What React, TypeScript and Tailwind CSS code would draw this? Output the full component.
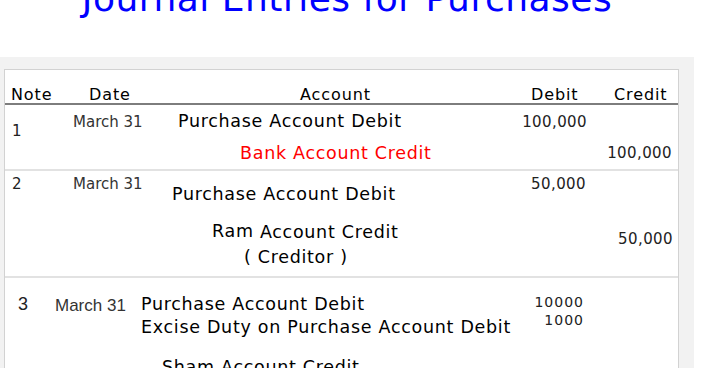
import React from "react";

const sans = "font-['DejaVu_Sans',sans-serif]";
const arial = "font-['Liberation_Sans',Arial,sans-serif]";

const HeaderRow = () => (
    <div className={`flex items-end h-[35px] border-b-2 border-[#7d7d7d] text-[16px] leading-none tracking-[0.9px] text-black ${sans}`}>
        <div className="w-[84px] pl-[6px]">Note</div>
        <div className="w-[211px]">Date</div>
        <div className="w-[231px]">Account</div>
        <div className="w-[83px]">Debit</div>
        <div className="flex-1">Credit</div>
    </div>
);

const EntryOne = () => (
    <div className={`flex h-[66px] border-b-2 border-[#e2e2e2] leading-none ${sans}`}>
        <div className="w-[60px] pl-[7px] pt-[19px] text-[15px] text-[#222]">1</div>
        <div className="w-[100px] pl-[8px] pt-[10px] text-[15px] text-[#333]">March 31</div>
        <div className="w-[340px] pt-[8px] text-[17.5px] tracking-[0.7px]">
            <div className="ml-[13px] text-black">Purchase Account Debit</div>
            <div className="ml-[75px] mt-[14px] text-[#ff0000]">Bank Account Credit</div>
        </div>
        <div className="w-[90px] pr-[8px] pt-[10px] text-right text-[15px] tracking-[0.4px] text-[#222]">100,000</div>
        <div className="flex-1 pr-[6px] pt-[41px] text-right text-[15px] tracking-[0.4px] text-[#222]">100,000</div>
    </div>
);

const EntryTwo = () => (
    <div className={`flex h-[107px] border-b-2 border-[#e2e2e2] leading-none ${sans}`}>
        <div className="w-[60px] pl-[7px] pt-[6px] text-[15px] text-[#222]">2</div>
        <div className="w-[100px] pl-[8px] pt-[6px] text-[15px] text-[#333]">March 31</div>
        <div className="w-[340px] pt-[15px] text-[17.5px] tracking-[0.7px] text-black">
            <div className="ml-[7px]">Purchase Account Debit</div>
            <div className="ml-[47px] mt-[19px]">
                <span className="align-[1px]">Ram</span> Account Credit
            </div>
            <div className="ml-[79px] mt-[8px]">( Creditor )</div>
        </div>
        <div className="w-[90px] pr-[9px] pt-[6px] text-right text-[15px] tracking-[0.4px] text-[#222]">50,000</div>
        <div className="flex-1 pr-[5px] pt-[61px] text-right text-[15px] tracking-[0.4px] text-[#222]">50,000</div>
    </div>
);

const EntryThree = () => (
    <div className="flex leading-none">
        <div className={`w-[45px] pl-[13px] pt-[17px] text-[18px] text-[#222] ${arial}`}>3</div>
        <div className={`w-[85px] pl-[5px] pt-[19px] text-[17px] text-[#333] ${arial}`}>March 31</div>
        <div className={`w-[385px] pl-[6px] pt-[18px] text-[17.5px] tracking-[0.7px] text-black ${sans}`}>
            <div>Purchase Account Debit</div>
            <div className="mt-[5px]">Excise Duty on Purchase Account Debit</div>
            <div className="ml-[21px] mt-[23px]">Sham Account Credit</div>
        </div>
        <div className={`w-[75px] pr-[11px] pt-[17px] text-right text-[14px] tracking-[1px] text-[#222] ${sans}`}>
            <div>10000</div>
            <div className="mt-[4px]">1000</div>
        </div>
    </div>
);

export default function App() {
    return (
        <div className="flex flex-col w-[701px] h-[368px] overflow-hidden bg-white">
            <div className="w-[694px] h-[57px] shrink-0">
                <h1 className={`-mt-[19px] text-center text-[36px] leading-none tracking-[0.5px] text-[#0000ff] ${sans}`}>
                    Journal Entries for Purchases
                </h1>
            </div>
            <section className="w-[694px] flex-1 bg-[#f2f2f2] pt-[12px] pl-[4px]">
                <div className="w-[675px] h-full bg-white border-l border-t border-r border-[#d2d2d2]">
                    <HeaderRow/>
                    <EntryOne/>
                    <EntryTwo/>
                    <EntryThree/>
                </div>
            </section>
        </div>
    );
}
